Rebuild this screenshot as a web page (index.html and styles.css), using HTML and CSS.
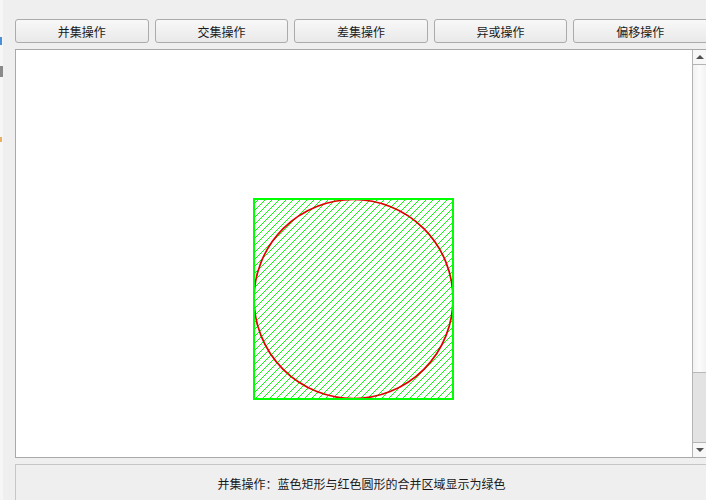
FILE: index.html
```html
<!DOCTYPE html>
<html lang="zh-CN">
<head>
<meta charset="utf-8">
<title>图形布尔操作</title>
<link rel="stylesheet" href="styles.css">
</head>
<body>
<div class="edge">
  <span class="mark mark-blue"></span>
  <span class="mark mark-gray"></span>
  <span class="mark mark-orange"></span>
</div>
<div class="app">
  <div class="toolbar">
    <button class="btn">并集操作</button>
    <button class="btn">交集操作</button>
    <button class="btn">差集操作</button>
    <button class="btn">异或操作</button>
    <button class="btn btn-last">偏移操作</button>
  </div>
  <div class="view">
    <div class="scene">
      <svg class="canvas" xmlns="http://www.w3.org/2000/svg">
        <defs>
          <pattern id="hatch" patternUnits="userSpaceOnUse" width="7" height="7">
            <path d="M0,7 L7,0 M-1,1 L1,-1 M6,8 L8,6" stroke="#00ff00" stroke-width="1" shape-rendering="crispEdges"/>
          </pattern>
        </defs>
        <rect x="238" y="149" width="199" height="200" fill="url(#hatch)"/>
        <circle cx="337.5" cy="249" r="99.5" fill="none" stroke="#e00000" stroke-width="1.7"/>
        <rect x="238" y="149" width="199" height="200" fill="none" stroke="#00ff00" stroke-width="2"/>
      </svg>
    </div>
    <div class="vscroll">
      <div class="arrow arrow-up"></div>
      <div class="track"></div>
      <div class="thumb"></div>
      <div class="arrow arrow-down"></div>
    </div>
  </div>
  <div class="status">并集操作：蓝色矩形与红色圆形的合并区域显示为绿色</div>
</div>
</body>
</html>
```
FILE: styles.css
```css
html, body {
  margin: 0;
  padding: 0;
}
body {
  width: 706px;
  height: 500px;
  overflow: hidden;
  display: flex;
  background: #efefef;
  font-family: "Noto Sans CJK SC", "Noto Sans", sans-serif;
  font-size: 12px;
  color: #1a1a1a;
}
.edge {
  width: 3px;
  flex: none;
  background: #f6f6f6;
  display: flex;
  flex-direction: column;
}
.mark {
  display: block;
}
.mark-blue {
  margin-top: 37px;
  width: 2px;
  height: 8px;
  background: #4a90d8;
}
.mark-gray {
  margin-top: 21px;
  width: 3px;
  height: 11px;
  background: #8a8a8a;
}
.mark-orange {
  margin-top: 60px;
  width: 2px;
  height: 5px;
  background: #eab060;
}
.app {
  flex: 1;
  margin-right: -1px;
  padding: 19px 0 0 12px;
  display: flex;
  flex-direction: column;
  gap: 6px;
  min-width: 0;
}
.toolbar {
  display: grid;
  grid-template-columns: repeat(5, 133.6px);
  gap: 6px;
  height: 24px;
  width: 692px;
}
.btn {
  margin: 0;
  padding: 0;
  width: 100%;
  height: 24px;
  border: 1px solid #ababab;
  border-radius: 3px;
  background: linear-gradient(to bottom, #f8f8f8, #e9e9e9);
  font-family: inherit;
  font-size: 12px;
  color: #1a1a1a;
  box-sizing: border-box;
}
.btn-last {
  width: calc(100% + 3px);
  padding-right: 3px;
}
.view {
  height: 409px;
  flex: none;
  box-sizing: border-box;
  border: 1px solid #a9a9a9;
  background: #ffffff;
  display: flex;
}
.scene {
  flex: 1;
  position: relative;
  overflow: hidden;
}
.canvas {
  display: block;
  width: 100%;
  height: 100%;
}
.vscroll {
  width: 13px;
  flex: none;
  border-left: 1px solid #b4b4b4;
  background: linear-gradient(to right, #f2f2f2, #fbfbfb 50%, #f2f2f2);
  display: flex;
  flex-direction: column;
}
.arrow {
  height: 14px;
  flex: none;
  display: flex;
  align-items: center;
  justify-content: center;
  background: #f7f7f7;
}
.arrow-up {
  border-bottom: 1px solid #b4b4b4;
}
.arrow-up::before {
  content: "";
  border-left: 4px solid transparent;
  border-right: 4px solid transparent;
  border-bottom: 4px solid #505050;
}
.arrow-down {
  border-top: 1px solid #b4b4b4;
}
.arrow-down::before {
  content: "";
  border-left: 4px solid transparent;
  border-right: 4px solid transparent;
  border-top: 4px solid #505050;
}
.track {
  flex: 1;
}
.thumb {
  height: 69px;
  flex: none;
  border-top: 1px solid #b8b8b8;
  background: #e3e3e3;
}
.status {
  height: 40px;
  flex: none;
  box-sizing: border-box;
  border: 1px solid #c6c6c6;
  border-right: none;
  background: #efefef;
  display: flex;
  align-items: center;
  justify-content: center;
  padding-bottom: 2px;
  color: #1a1a1a;
}
```
